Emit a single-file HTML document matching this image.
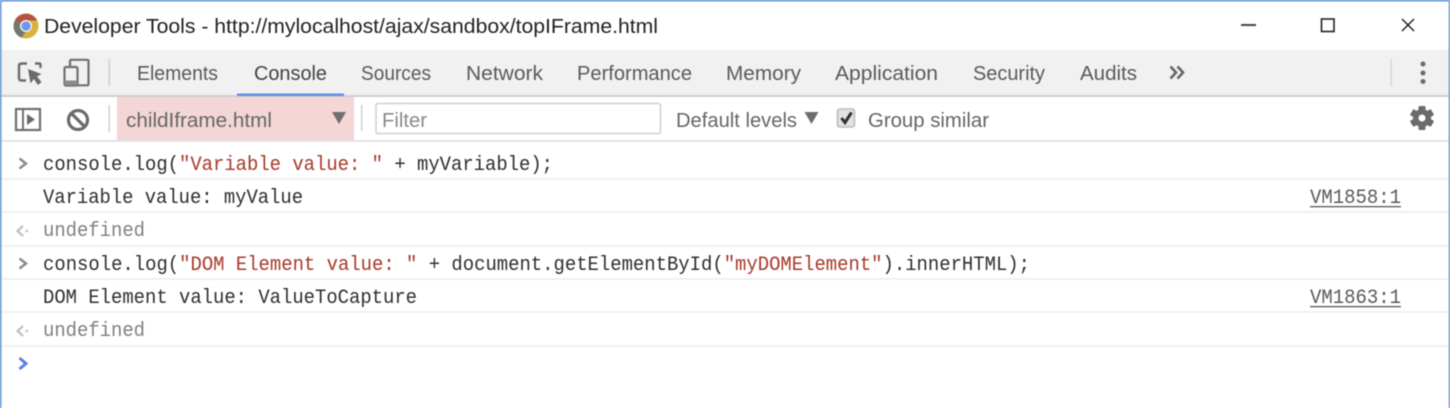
<!DOCTYPE html>
<html><head><meta charset="utf-8">
<style>
html,body{margin:0;padding:0;width:1450px;height:408px;overflow:hidden;background:#fff}
svg{display:block;filter:blur(.45px)}
.s{font-family:"Liberation Sans",sans-serif}
.m{font-family:"Liberation Mono",monospace;font-size:20px}
.tab{font-size:20px;fill:#5a5a5a}
.tb{font-size:20px;fill:#666}
.c{fill:#2e2e2e}
.r{fill:#a8382a}
.g{fill:#808080}
</style></head><body>
<svg width="1450" height="408" viewBox="0 0 1450 408" xmlns="http://www.w3.org/2000/svg">
<rect width="1450" height="408" fill="#fff"/>
<!-- toolbars -->
<rect x="1" y="50" width="1448" height="45" fill="#f1f1f1"/>
<rect x="1" y="95" width="1448" height="2" fill="#cfcfcf"/>
<rect x="117" y="97" width="237" height="43" fill="#f3d6d5"/>
<rect x="1" y="140" width="1448" height="2" fill="#e4e4e4"/>
<rect x="237" y="93.500" width="107" height="2.500" fill="#5f8fe8"/>
<!-- console lines -->
<g fill="#f0f0f0">
<rect x="2" y="178" width="1446" height="2"/>
<rect x="2" y="211" width="1446" height="2"/>
<rect x="2" y="245" width="1446" height="2"/>
<rect x="2" y="278" width="1446" height="2"/>
<rect x="2" y="311" width="1446" height="2"/>
<rect x="2" y="345" width="1446" height="2"/>
</g>
<!-- window border -->
<rect x="0" y="0" width="1450" height="1.500" fill="#5b8fdb"/>
<rect x="0" y="0" width="1.500" height="408" fill="#5b8fdb"/>
<rect x="1448.700" y="0" width="1.300" height="408" fill="#5b8fdb"/>
<!-- chrome logo -->
<circle cx="26" cy="26" r="12.500" fill="#d9b23c"/>
<path d="M26 26 L15.200 19.800 A12.500 12.500 0 0 1 37.200 20.500 L26 20.500Z" fill="#b5523f"/>
<path d="M26 26 L15.200 19.700 A12.500 12.500 0 0 0 21.500 37.700 L27 30Z" fill="#74786c"/>
<circle cx="26" cy="26" r="6" fill="#f4f4f4"/>
<circle cx="26" cy="26" r="4.600" fill="#6e95ea"/>
<!-- title -->
<text class="s" x="44" y="33" font-size="20" fill="#222" textLength="614" lengthAdjust="spacingAndGlyphs">Developer Tools - http://mylocalhost/ajax/sandbox/topIFrame.html</text>
<!-- window controls -->
<rect x="1241" y="24" width="15" height="2" fill="#444"/>
<rect x="1321.500" y="19" width="12.500" height="12.500" fill="none" stroke="#222" stroke-width="1.600"/>
<path d="M1402 19 L1414 31 M1414 19 L1402 31" stroke="#222" stroke-width="1.500" fill="none"/>
<!-- inspect icon -->
<path d="M27 63.500 H22 Q19 63.500 19 66 V78 Q19 80.500 22 80.500 H26" fill="none" stroke="#6b6b6b" stroke-width="2.400"/>
<path d="M35 63.500 H39 Q40.500 63.500 40.500 65 V68" fill="none" stroke="#6b6b6b" stroke-width="2.400"/>
<path d="M28 69 L41.500 74 L37 76.500 L41.500 82 L38 85 L33.800 79 L30.500 83.500Z" fill="#6b6b6b"/>
<!-- device icon -->
<path d="M70 66 V61 Q70 59.800 71.500 59.800 H87 Q88.500 59.800 88.500 61 V84 Q88.500 85.300 87 85.300 H72" fill="none" stroke="#707070" stroke-width="2.200"/>
<rect x="64.500" y="67" width="13" height="18.500" rx="1.500" fill="#f1f1f1" stroke="#707070" stroke-width="2.200"/>
<rect x="64.500" y="80.500" width="13" height="4.500" fill="#8b8b8b"/>
<rect x="108.500" y="59" width="1.500" height="27" fill="#cfcfcf"/>
<!-- tabs -->
<g class="s tab">
<text x="137" y="80" textLength="81" lengthAdjust="spacingAndGlyphs">Elements</text>
<text x="254" y="80" textLength="73" lengthAdjust="spacingAndGlyphs" fill="#444">Console</text>
<text x="361" y="80" textLength="70" lengthAdjust="spacingAndGlyphs">Sources</text>
<text x="466" y="80" textLength="77" lengthAdjust="spacingAndGlyphs">Network</text>
<text x="577" y="80" textLength="115" lengthAdjust="spacingAndGlyphs">Performance</text>
<text x="726" y="80" textLength="75" lengthAdjust="spacingAndGlyphs">Memory</text>
<text x="835" y="80" textLength="103" lengthAdjust="spacingAndGlyphs">Application</text>
<text x="973" y="80" textLength="72" lengthAdjust="spacingAndGlyphs">Security</text>
<text x="1080" y="80" textLength="57" lengthAdjust="spacingAndGlyphs">Audits</text>
</g>
<path d="M1170.500 66.500 L1176 72.500 L1170.500 78.500 M1177.500 66.500 L1183 72.500 L1177.500 78.500" fill="none" stroke="#666" stroke-width="2.600"/>
<rect x="1390.500" y="59" width="1.500" height="27" fill="#d5d5d5"/>
<circle cx="1423" cy="64" r="2.500" fill="#6b6b6b"/>
<circle cx="1423" cy="73" r="2.500" fill="#6b6b6b"/>
<circle cx="1423" cy="81.500" r="2.500" fill="#6b6b6b"/>
<!-- second toolbar icons -->
<rect x="16" y="109" width="24" height="21" fill="none" stroke="#707070" stroke-width="2.200"/>
<rect x="22" y="109" width="2" height="21" fill="#707070"/>
<path d="M27 114 L35 119.500 L27 125Z" fill="#6b6b6b"/>
<circle cx="78" cy="120" r="9.500" fill="none" stroke="#6b6b6b" stroke-width="3.200"/>
<path d="M71.500 113.500 L84.500 126.500" stroke="#6b6b6b" stroke-width="3.200"/>
<rect x="108.500" y="105" width="1.500" height="27" fill="#cfcfcf"/>
<text class="s tb" x="126" y="127" textLength="146" lengthAdjust="spacingAndGlyphs">childIframe.html</text>
<path d="M332 112 H346 L339 124Z" fill="#6e6e6e"/>
<rect x="361" y="105" width="1.500" height="26" fill="#cfcfcf"/>
<rect x="376" y="103.500" width="284.500" height="30" rx="2" fill="#fff" stroke="#cfcfcf" stroke-width="1.500"/>
<text class="s" x="382" y="127" font-size="20" fill="#8a8a8a" textLength="45" lengthAdjust="spacingAndGlyphs">Filter</text>
<text class="s tb" x="676" y="127" textLength="121" lengthAdjust="spacingAndGlyphs">Default levels</text>
<path d="M804.500 112 H818.500 L811.500 124Z" fill="#6e6e6e"/>
<rect x="837.500" y="109" width="17" height="18" rx="2.500" fill="#e2e2e2" stroke="#bcbcbc" stroke-width="1.600"/>
<path d="M841.500 118 L845 122.500 L851.500 112.500" fill="none" stroke="#333" stroke-width="3"/>
<text class="s tb" x="868" y="127" textLength="121" lengthAdjust="spacingAndGlyphs">Group similar</text>
<!-- gear -->
<g transform="translate(1422 118)" fill="#6b6b6b">
<circle r="9"/>
<rect x="-3.500" y="-12" width="7" height="24" rx="1"/>
<rect x="-3.500" y="-12" width="7" height="24" rx="1" transform="rotate(60)"/>
<rect x="-3.500" y="-12" width="7" height="24" rx="1" transform="rotate(120)"/>
<circle r="3.500" fill="#fff"/>
</g>
<!-- console -->
<path d="M19.500 158.500 L26 163.500 L19.500 168.500" fill="none" stroke="#8a8a8a" stroke-width="2.400"/>
<text class="m c" x="43" y="170" textLength="510" lengthAdjust="spacingAndGlyphs" xml:space="preserve">console.log(<tspan class="r">"Variable value: "</tspan> + myVariable);</text>
<text class="m c" x="43" y="203" textLength="260" lengthAdjust="spacingAndGlyphs" xml:space="preserve">Variable value: myValue</text>
<path d="M23 226 L17.500 231 L23 236 M25.500 231 H28" fill="none" stroke="#c0c0c0" stroke-width="2.200"/>
<text class="m g" x="43" y="236" textLength="102" lengthAdjust="spacingAndGlyphs">undefined</text>
<path d="M19.500 258.500 L26 263.500 L19.500 268.500" fill="none" stroke="#8a8a8a" stroke-width="2.400"/>
<text class="m c" x="43" y="270" textLength="987" lengthAdjust="spacingAndGlyphs" xml:space="preserve">console.log(<tspan class="r">"DOM Element value: "</tspan> + document.getElementById(<tspan class="r">"myDOMElement"</tspan>).innerHTML);</text>
<text class="m c" x="43" y="303" textLength="374" lengthAdjust="spacingAndGlyphs" xml:space="preserve">DOM Element value: ValueToCapture</text>
<path d="M23 326 L17.500 331 L23 336 M25.500 331 H28" fill="none" stroke="#c0c0c0" stroke-width="2.200"/>
<text class="m g" x="43" y="336" textLength="102" lengthAdjust="spacingAndGlyphs">undefined</text>
<path d="M19.500 358 L26 363.500 L19.500 369" fill="none" stroke="#5b82e0" stroke-width="3"/>
<text class="m" x="1310" y="203" textLength="91" lengthAdjust="spacingAndGlyphs" fill="#5a5a5a">VM1858:1</text>
<rect x="1310" y="206" width="91" height="1.300" fill="#5a5a5a"/>
<text class="m" x="1310" y="303" textLength="91" lengthAdjust="spacingAndGlyphs" fill="#5a5a5a">VM1863:1</text>
<rect x="1310" y="306" width="91" height="1.300" fill="#5a5a5a"/>
</svg>
</body></html>
